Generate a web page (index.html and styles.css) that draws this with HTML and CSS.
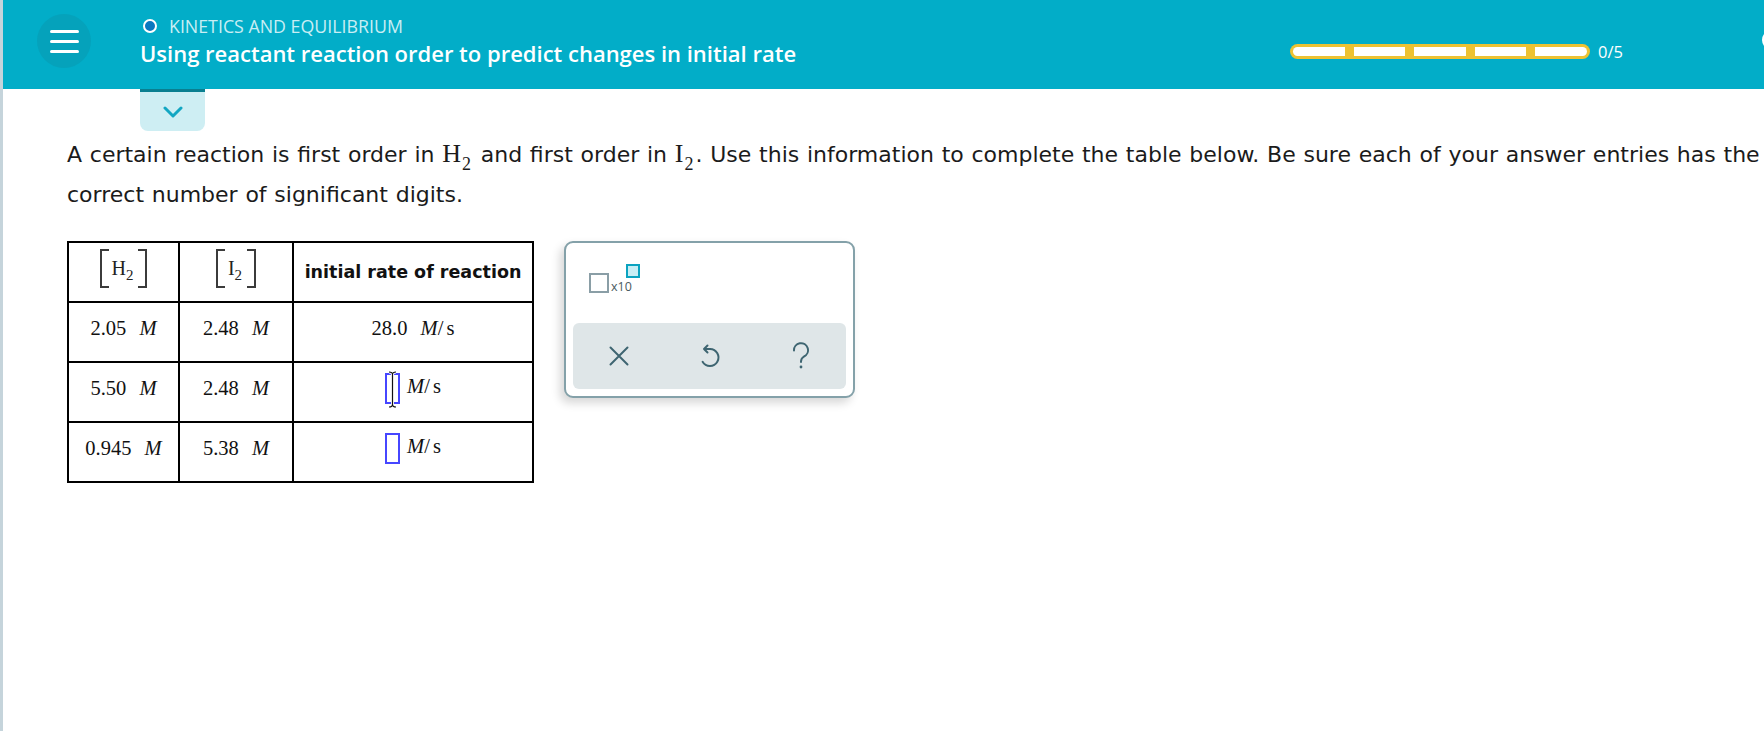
FILE: index.html
```html
<!DOCTYPE html>
<html lang="en">
<head>
<meta charset="utf-8">
<title>Using reactant reaction order to predict changes in initial rate</title>
<link rel="stylesheet" href="styles.css">
</head>
<body>
<div class="app">
  <header class="topbar">
    <button class="menu-btn" aria-label="Menu"><span></span><span></span><span></span></button>
    <div class="titles">
      <div class="topic"><span class="radio"></span>KINETICS AND EQUILIBRIUM</div>
      <div class="lesson">Using reactant reaction order to predict changes in initial rate</div>
    </div>
    <div class="progress">
      <div class="bar"><span></span><span></span><span></span><span></span><span></span></div>
      <span class="count">0/5</span>
    </div>
    <span class="edge"></span>
  </header>

  <div class="tab">
    <svg width="20" height="12" viewBox="0 0 20 12"><polyline points="2,2 10,10 18,2" fill="none" stroke="#12a6c2" stroke-width="3" stroke-linecap="round" stroke-linejoin="round"/></svg>
  </div>

  <main class="content">
    <p class="question">A certain reaction is first order in <span class="chem">H<sub>2</sub></span> and first order in <span class="chem">I<sub>2</sub></span>. Use this information to complete the table below. Be sure each of your answer entries has the correct number of significant digits.</p>

    <div class="work">
      <table class="data">
        <tr>
          <th class="c1"><span class="conc"><span class="sp">H<sub>2</sub></span></span></th>
          <th class="c2"><span class="conc"><span class="sp">I<sub>2</sub></span></span></th>
          <th class="c3 rate-head">initial rate of reaction</th>
        </tr>
        <tr>
          <td>2.05 <i>M</i></td>
          <td>2.48 <i>M</i></td>
          <td>28.0 <i>M</i>/<span class="unit-s">s</span></td>
        </tr>
        <tr>
          <td>5.50 <i>M</i></td>
          <td>2.48 <i>M</i></td>
          <td><span class="blank"><svg class="ibeam" width="9" height="37" viewBox="0 0 9 37"><path d="M1 1 Q4.5 1 4.5 3.5 Q4.5 1 8 1 M4.5 3.5 V33.5 M1 36 Q4.5 36 4.5 33.5 Q4.5 36 8 36" fill="none" stroke="#fff" stroke-width="3"/><path d="M1 1 Q4.5 1 4.5 3.5 Q4.5 1 8 1 M4.5 3.5 V33.5 M1 36 Q4.5 36 4.5 33.5 Q4.5 36 8 36" fill="none" stroke="#111" stroke-width="1.2"/></svg></span><i>M</i>/<span class="unit-s">s</span></td>
        </tr>
        <tr>
          <td>0.945 <i>M</i></td>
          <td>5.38 <i>M</i></td>
          <td><span class="blank"></span><i>M</i>/<span class="unit-s">s</span></td>
        </tr>
      </table>

      <div class="widget">
        <div class="template">
          <div class="sci">
            <span class="base"></span>
            <span class="x10">x10</span>
            <span class="sup"></span>
          </div>
        </div>
        <div class="toolbar">
          <button class="tool" aria-label="Clear">
            <svg width="20" height="20" viewBox="0 0 20 20"><path d="M1.5 1.5 L18.5 18.5 M18.5 1.5 L1.5 18.5" stroke="#3e6571" stroke-width="2" stroke-linecap="round"/></svg>
          </button>
          <button class="tool" aria-label="Undo">
            <svg width="24" height="26" viewBox="0 0 24 26"><path d="M12 6 A8.5 8.5 0 1 1 4.6 18.75" fill="none" stroke="#3e6571" stroke-width="2" stroke-linecap="round"/><path d="M12 6 H6 M9.5 2.5 L6 6 L9.5 9.5" fill="none" stroke="#3e6571" stroke-width="2" stroke-linecap="round" stroke-linejoin="round"/></svg>
          </button>
          <button class="tool" aria-label="Help">
            <svg width="20" height="28" viewBox="0 0 20 28"><path d="M3 8.5 A7 7 0 1 1 13 14.5 C11 15.8 10 17 10 19.5 V20" fill="none" stroke="#3e6571" stroke-width="2" stroke-linecap="round"/><circle cx="10" cy="25" r="1.4" fill="#3e6571"/></svg>
          </button>
        </div>
      </div>
    </div>
  </main>
</div>
</body>
</html>
```

FILE: styles.css
```css
* { box-sizing: border-box; }

html, body {
  margin: 0;
  padding: 0;
}

body {
  background: #fff;
  overflow: hidden;
  font-family: "DejaVu Sans", Verdana, sans-serif;
}

.app {
  border-left: 3px solid #c5d4db;
  min-height: 731px;
}

/* ---------- top bar ---------- */
.topbar {
  display: flex;
  align-items: flex-start;
  height: 89px;
  background: #02adc8;
  overflow: hidden;
}

.menu-btn {
  flex: none;
  width: 54px;
  height: 54px;
  margin: 14px 0 0 34px;
  padding: 0;
  border: 0;
  border-radius: 50%;
  background: #05a2bb;
  display: flex;
  flex-direction: column;
  align-items: center;
  justify-content: center;
  gap: 7px;
}

.menu-btn span {
  display: block;
  width: 29px;
  height: 3px;
  border-radius: 2px;
  background: #fff;
}

.titles {
  margin-left: 49px;
  padding-top: 16px;
  font-family: "Open Sans", Lato, sans-serif;
}

.topic {
  display: flex;
  align-items: center;
  height: 20px;
  font-size: 17.8px;
  font-weight: 500;
  color: #c9eef4;
}

.radio {
  flex: none;
  width: 14px;
  height: 14px;
  margin: 0 12px 0 3px;
  border: 2px solid #fff;
  border-radius: 50%;
  background: #0b78bf;
}

.lesson {
  margin-top: 3px;
  font-size: 22px;
  font-weight: 600;
  line-height: 28px;
  color: #fff;
}

.progress {
  margin-left: auto;
  margin-top: 44px;
  display: flex;
  align-items: center;
  gap: 8px;
}

.bar {
  display: flex;
  gap: 9px;
  width: 300px;
  height: 15px;
  padding: 3px;
  border-radius: 8px;
  background: #eec232;
}

.bar span {
  flex: 1;
  background: #fff;
}

.bar span:first-child { border-radius: 5px 0 0 5px; }
.bar span:last-child { border-radius: 0 5px 5px 0; }

.count {
  font-family: "Open Sans", Lato, sans-serif;
  font-size: 16.5px;
  line-height: 15px;
  color: #fff;
}

.edge {
  flex: none;
  width: 20px;
  height: 20px;
  margin: 30px -18px 0 139px;
  border: 2px solid #fff;
  border-radius: 50%;
}

/* ---------- drop tab ---------- */
.tab {
  width: 65px;
  height: 42px;
  margin-left: 137px;
  border-top: 3px solid #0a7f90;
  border-radius: 0 0 8px 8px;
  background: #ceeef3;
  display: flex;
  align-items: center;
  justify-content: center;
}

.tab svg { display: block; }

/* ---------- content ---------- */
.content {
  padding-left: 64px;
}

.question {
  margin: 4px 0 0;
  font-size: 22px;
  line-height: 40px;
  word-spacing: 0.75px;
  color: #1b1b1b;
}

.chem {
  font-family: "Liberation Serif", "Times New Roman", serif;
  font-size: 26px;
  line-height: 1;
  padding-right: 2px;
}

.chem sub {
  margin-left: 1px;
  font-size: 18px;
  line-height: 0;
  vertical-align: -8px;
}

.work {
  display: flex;
  align-items: flex-start;
  gap: 30px;
  margin-top: 26px;
}

/* ---------- table ---------- */
.data {
  border-collapse: separate;
  border-spacing: 0;
  border-top: 2px solid #000;
  border-left: 2px solid #000;
  font-family: "Liberation Serif", "Times New Roman", serif;
  font-size: 20.5px;
  color: #111;
}

.data th,
.data td {
  height: 60px;
  padding: 0;
  border-right: 2px solid #000;
  border-bottom: 2px solid #000;
  text-align: center;
  vertical-align: middle;
  font-weight: normal;
  white-space: nowrap;
}

.data td {
  padding-bottom: 7px;
}

.data td i {
  margin-left: 8px;
}

.c1 { width: 111px; }
.c2 { width: 114px; }
.c3 { width: 240px; }

.rate-head {
  font-family: "DejaVu Sans", Verdana, sans-serif;
  font-size: 17.5px;
  font-weight: bold !important;
  color: #111;
}

.conc {
  display: inline-flex;
  align-items: center;
  vertical-align: middle;
  margin-top: -8px;
}

.conc::before,
.conc::after {
  content: "";
  width: 7px;
  height: 35px;
  border: 2px solid #3b3b3b;
}

.conc::before { border-right: 0; }
.conc::after { border-left: 0; }

.sp {
  margin: 0 5px 0 3px;
  font-size: 20px;
  line-height: 1;
  color: #222;
}

.sp sub {
  font-size: 15px;
  line-height: 0;
  vertical-align: -5px;
}

.unit-s {
  margin-left: 3px;
}

.blank {
  position: relative;
  display: inline-block;
  width: 15px;
  height: 31px;
  margin-right: 7px;
  vertical-align: middle;
  border: 2px solid #4646ff;
}

.blank + i { margin-left: 0 !important; }

.ibeam {
  position: absolute;
  left: 1px;
  top: -4px;
}

/* ---------- answer widget ---------- */
.widget {
  flex: none;
  width: 291px;
  height: 157px;
  padding: 0 7px 7px;
  border: 2px solid #84a1a9;
  border-radius: 9px;
  background: #fff;
  box-shadow: -4px 5px 10px rgba(0, 0, 0, 0.16);
  display: flex;
  flex-direction: column;
}

.template {
  height: 80px;
  padding: 21px 0 0 16px;
}

.sci {
  display: flex;
  align-items: flex-end;
  height: 29px;
}

.base {
  width: 20px;
  height: 20px;
  margin-right: 2px;
  border: 2px solid #8a9ea6;
}

.x10 {
  font-family: "Open Sans", "DejaVu Sans", sans-serif;
  font-size: 12.5px;
  line-height: 12px;
  color: #4a5a60;
}

.sup {
  align-self: flex-start;
  width: 14px;
  height: 14px;
  margin-left: -6px;
  border: 2px solid #0ba3c0;
  background: #c8eef5;
}

.toolbar {
  height: 66px;
  border-radius: 6px;
  background: #dfe6e8;
  display: flex;
}

.tool {
  flex: 1;
  padding: 0;
  border: 0;
  background: transparent;
  display: flex;
  align-items: center;
  justify-content: center;
}

.tool svg { display: block; }
```
